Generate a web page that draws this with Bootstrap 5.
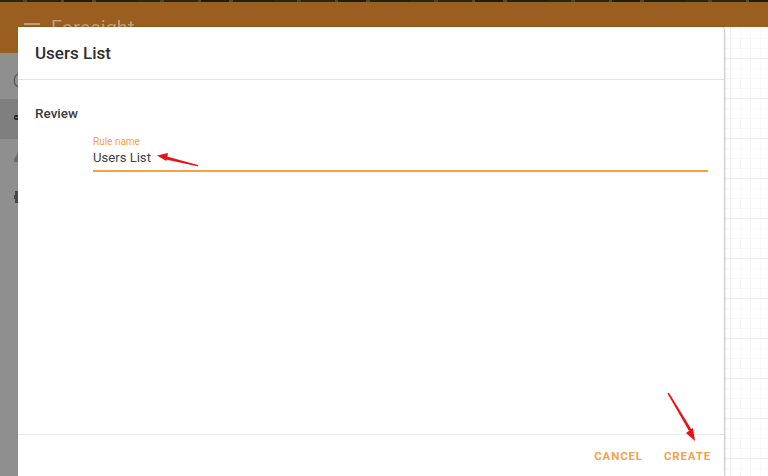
<!DOCTYPE html>
<html lang="en">
<head>
<meta charset="utf-8">
<title>Users List</title>
<link href="https://cdn.jsdelivr.net/npm/bootstrap@5.3.0/dist/css/bootstrap.min.css" rel="stylesheet">
<style>
html,body{height:476px;overflow:hidden;background:#fff;font-family:Roboto,"Liberation Sans",sans-serif}
.stage{height:476px;position:relative;filter:blur(.35px)}
.speckle{height:2px;background:repeating-linear-gradient(90deg,#1f2a18 0 23px,#3f4a2c 23px 27px,#2a2414 27px 61px,#38503c 61px 64px,#1d1d10 64px 92px,#50462c 92px 96px,#182414 96px 137px)}
.topbar{height:25px;background:#9a5e20;color:#c0a07c;font-size:20px;line-height:24px;padding-left:51px;padding-top:14px;white-space:nowrap}
.burger{left:24px;top:23px;width:16px;height:2px;background:#c0a07c}
.side-col{width:18px;background:#8f8f8f}
.side-head{height:26px;background:#9a5e20}
.side-item{height:40px;overflow:hidden;padding-bottom:4px}
.side-item.side-active{background:#7f7f7f}
.side-first{height:46px;padding-top:8px;padding-bottom:0}
.canvas{background-color:#fff;background-image:linear-gradient(#efefef 1px,transparent 1px),linear-gradient(90deg,#efefef 1px,transparent 1px),linear-gradient(#f8f8f8 1px,transparent 1px),linear-gradient(90deg,#f8f8f8 1px,transparent 1px);background-size:100% 40px,40px 100%,100% 10px,10px 100%;background-position:0 31px,32px 0,0 1px,2px 0}
.dialog{left:18px;top:27px;width:706px;height:449px;border-radius:4px 4px 0 0;background:#fff;box-shadow:1px 0 2px rgba(0,0,0,.25);z-index:5}
.dlg-head{height:53px;border-bottom:1px solid #e4e4e4;padding-left:17px;font-size:17px;font-weight:500;color:#2f2f2f;line-height:52px}
.dlg-body{padding:25px 16px 0 17px}
.step-name{font-size:13.5px;font-weight:500;color:#3c3c3c;line-height:16px}
.field{margin-left:58px;margin-top:15px;border-bottom:2px solid #f8a13f;height:36px;width:615px}
.field-label{font-size:10px;line-height:11px;color:#f8a13f}
.field-value{font-size:13.1px;line-height:19px;margin-top:1px;color:#3f3f46}
.dlg-foot{height:42px;border-top:1px solid #ececec;padding-right:13px;gap:21px}
.act{font-size:11.5px;font-weight:700;letter-spacing:.85px;color:#f6a24b;padding:0;border:0;background:none;line-height:40px;border-radius:0}
.arrow-layer{left:0;top:0;width:768px;height:476px;z-index:6;pointer-events:none}
</style>
</head>
<body>
<div class="stage d-flex flex-column">
  <div class="speckle"></div>
  <div class="topbar">Foresight</div>
  <div class="burger position-absolute"></div>
  <div class="d-flex flex-grow-1">
    <div class="side-col d-flex flex-column">
      <div class="side-head"></div>
      <div class="side-item side-first d-flex align-items-center justify-content-end">
        <svg width="5" height="15" viewBox="0 0 5 15"><path d="M5 1A7.500 7.500 0 0 0 5 14" fill="none" stroke="#5c5c5c" stroke-width="1.400"/></svg>
      </div>
      <div class="side-item side-active d-flex align-items-center justify-content-end">
        <svg width="4" height="5" viewBox="0 0 4 5"><path d="M4 1H2A1.500 1.500 0 0 0 2 4H4" fill="none" stroke="#2b2b2b" stroke-width="1.800"/></svg>
      </div>
      <div class="side-item d-flex align-items-center justify-content-end">
        <svg width="4" height="9" viewBox="0 0 4 9"><path d="M4 0V9H0V6Z" fill="#6a6a6a"/></svg>
      </div>
      <div class="side-item d-flex align-items-center justify-content-end">
        <svg width="4" height="12" viewBox="0 0 4 12"><path d="M1 0H4V12H1V8H0V4H1Z" fill="#484848"/></svg>
      </div>
    </div>
    <div class="canvas flex-grow-1"></div>
  </div>
  <div class="dialog position-absolute d-flex flex-column">
    <div class="dlg-head">Users List</div>
    <div class="dlg-body flex-grow-1">
      <div class="step-name">Review</div>
      <div class="field">
        <div class="field-label">Rule name</div>
        <div class="field-value">Users List</div>
      </div>
    </div>
    <div class="dlg-foot d-flex justify-content-end align-items-center">
      <button type="button" class="btn act">CANCEL</button>
      <button type="button" class="btn act">CREATE</button>
    </div>
  </div>
  <svg class="arrow-layer position-absolute" viewBox="0 0 768 476">
    <path d="M198.500 166.500L197.800 165L167 156.500L166 159.500Z" fill="#ea1014"/>
    <path d="M157 155.500L168 153L166.500 161Z" fill="#ea1014"/>
    <path d="M667.500 393.500L669 392.800L691.500 429.500L689 431Z" fill="#ea1014"/>
    <path d="M695 441L686 433L693 428Z" fill="#ea1014"/>
  </svg>
</div>
<script src="https://cdn.jsdelivr.net/npm/bootstrap@5.3.0/dist/js/bootstrap.bundle.min.js"></script>
</body>
</html>
